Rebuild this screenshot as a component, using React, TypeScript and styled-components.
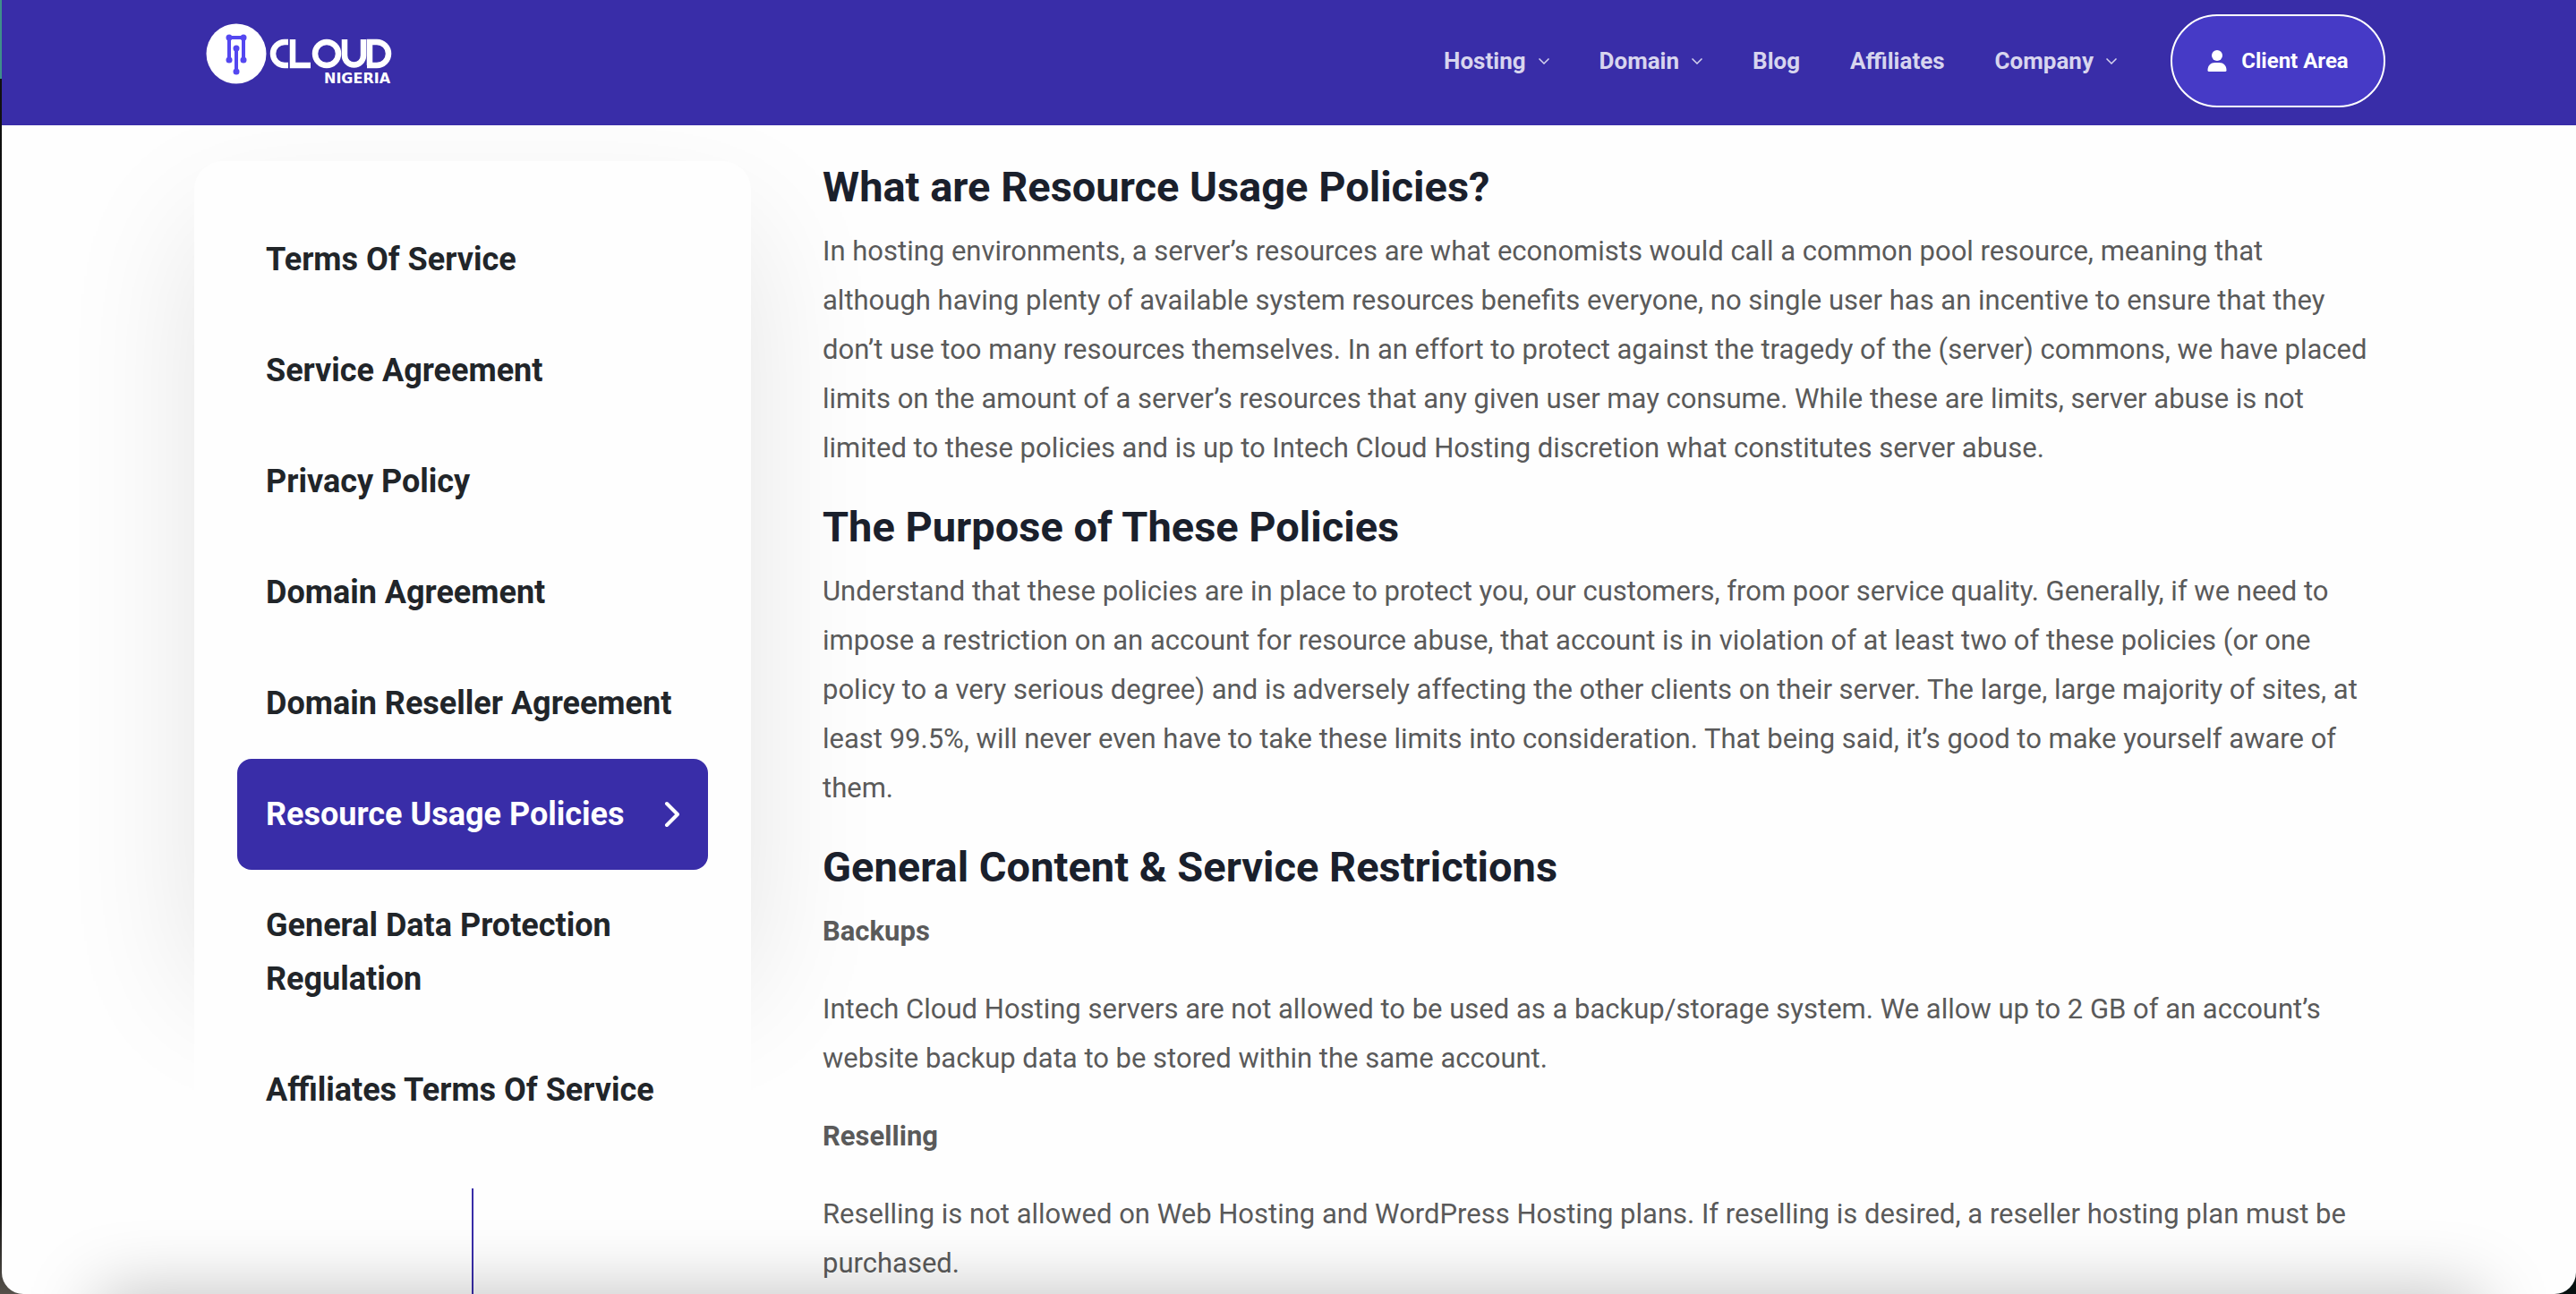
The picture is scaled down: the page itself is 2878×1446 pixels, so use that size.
import React from 'react';
import styled, { createGlobalStyle, css } from 'styled-components';

const brand = '#392da8';

const GlobalStyle = createGlobalStyle`
  * { box-sizing: border-box; }
  html {
    background:
      linear-gradient(90deg, transparent 50%, #06100f 50%),
      linear-gradient(#3f8f8b 88px, #111111 88px, #050505 92%, #55514b 100%);
  }
  body {
    margin: 0;
    font-family: Roboto, "Liberation Sans", sans-serif;
    color: #5a5a5a;
  }
  a { color: inherit; text-decoration: none; }
`;

const Shell = styled.div`
  position: relative;
  height: 100vh;
  margin-left: 2px;
  overflow: hidden;
  background: #fefefe;
  border-radius: 0 0 24px 24px;
`;

const Header = styled.header`
  position: relative;
  z-index: 2;
  padding: 16px 213px 20px 228px;
  background: ${brand};
`;

const HeaderRow = styled.div`
  display: flex;
  align-items: flex-start;
  justify-content: space-between;
`;

const LogoLink = styled.a`
  display: block;
  svg { display: block; }
`;

const Nav = styled.nav`
  display: flex;
  align-items: center;
  gap: 56px;
`;

const NavLink = styled.a`
  display: flex;
  align-items: center;
  gap: 14px;
  font-size: 26px;
  line-height: 40px;
  font-weight: 700;
  color: #d7d5ee;
`;

const ClientButton = styled.button`
  display: flex;
  align-items: center;
  justify-content: center;
  gap: 16px;
  width: 240px;
  height: 104px;
  margin-left: 4px;
  border: 2px solid #ffffff;
  border-radius: 52px;
  background: #463ac6;
  color: #ffffff;
  font: 700 24px/40px Roboto, "Liberation Sans", sans-serif;
  cursor: pointer;
`;

const Main = styled.main`
  display: grid;
  grid-template-columns: 622px minmax(0, 1fr);
  column-gap: 80px;
  align-items: start;
  padding: 40px 228px 0 215px;
`;

const Sidebar = styled.aside`
  position: relative;
  &::before {
    content: '';
    position: absolute;
    inset: 72px 4px 460px;
    box-shadow: 0 0 144px rgba(0, 0, 0, 0.11);
  }
`;

const Card = styled.div`
  position: relative;
  padding: 48px;
  border-radius: 32px;
  background: #fefefe;
`;

const Menu = styled.ul`
  margin: 0;
  padding: 0;
  list-style: none;
`;

const MenuLink = styled.a<{ $active?: boolean }>`
  display: flex;
  align-items: center;
  justify-content: space-between;
  padding: 32px;
  border-radius: 16px;
  font-size: 36px;
  line-height: 60px;
  font-weight: 700;
  color: #212529;
  ${(p) => p.$active && css`
    background: ${brand};
    color: #ffffff;
  `}
`;

const Rail = styled.div`
  width: 2px;
  height: 240px;
  margin: 0 auto;
  background: ${brand};
`;

const Article = styled.article`
  position: relative;
`;

const Section = styled.section`
  margin-bottom: 32px;
`;

const Heading = styled.h2`
  margin: 0 0 16px;
  font-size: 47px;
  line-height: 57px;
  font-weight: 700;
  color: #1a202c;
`;

const Text = styled.p`
  margin: 0 0 32px;
  font-size: 31px;
  line-height: 55px;
`;

const DockShade = styled.div`
  position: absolute;
  z-index: 3;
  top: 100%;
  left: 108px;
  right: 108px;
  height: 200px;
  box-shadow: 0 0 80px rgba(0, 0, 0, 0.25);
  pointer-events: none;
`;

const Logo = () => (
  <svg width="212" height="82" viewBox="0 0 212 82" role="img" aria-label="Cloud Nigeria">
    <circle cx="34" cy="44" r="33.5" fill="#fff" />
    <g stroke="#5447f0" strokeWidth="4" fill="none">
      <path d="M26 51V26H42V51M34 38V64" />
    </g>
    <g fill="#5447f0">
      <circle cx="26" cy="26" r="3.5" />
      <circle cx="42" cy="26" r="3.5" />
      <circle cx="26" cy="51" r="3.5" />
      <circle cx="42" cy="51" r="3.5" />
      <circle cx="34" cy="38" r="3.5" />
      <circle cx="34" cy="64" r="3.5" />
    </g>
    <g stroke="#fff" strokeWidth="6.5" fill="none">
      <path d="M92 31H88a13 13 0 0 0 0 26H92" />
      <path d="M97 28V57H117" />
      <circle cx="135" cy="44" r="13" />
      <path d="M155 28V46a10.500 10.500 0 0 0 21 0V28" />
      <path d="M183 57V31H191a13 13 0 0 1 0 26H180" />
    </g>
    <text x="132" y="77" fill="#fff" fontSize="16" fontWeight="700" fontFamily="DejaVu Sans, sans-serif">NIGERIA</text>
  </svg>
);

const ChevronDown = () => (
  <svg width="12" height="10" viewBox="0 0 12 10" fill="none" stroke="currentColor" strokeWidth="1.5" aria-hidden="true">
    <path d="M0.5 2.500l5.500 5.500 5.500-5.500" />
  </svg>
);

const ChevronRight = () => (
  <svg width="18" height="30" viewBox="0 0 18 30" fill="none" stroke="currentColor" strokeWidth="4" strokeLinecap="round" strokeLinejoin="round" aria-hidden="true">
    <path d="M4 3l12 12L4 27" />
  </svg>
);

const UserIcon = () => (
  <svg width="22" height="24" viewBox="0 0 22 24" fill="currentColor" aria-hidden="true">
    <circle cx="11" cy="6" r="6" />
    <path d="M0.500 22.500C0.500 17 4 14 8.500 14h5c4.500 0 8 3 8 8.500a1.500 1.500 0 0 1-1.500 1.500H2a1.500 1.500 0 0 1-1.500-1.500z" />
  </svg>
);

const navItems = [
  { label: 'Hosting', menu: true },
  { label: 'Domain', menu: true },
  { label: 'Blog' },
  { label: 'Affiliates' },
  { label: 'Company', menu: true },
];

const policies = [
  'Terms Of Service',
  'Service Agreement',
  'Privacy Policy',
  'Domain Agreement',
  'Domain Reseller Agreement',
  'Resource Usage Policies',
  'General Data Protection Regulation',
  'Affiliates Terms Of Service',
];

export default function App() {
  return (
    <>
      <GlobalStyle />
      <Shell>
        <Header>
          <HeaderRow>
            <LogoLink href="#home"><Logo /></LogoLink>
            <Nav>
              {navItems.map((item) => (
                <NavLink key={item.label} href="#nav">
                  {item.label}
                  {item.menu && <ChevronDown />}
                </NavLink>
              ))}
              <ClientButton type="button"><UserIcon />Client Area</ClientButton>
            </Nav>
          </HeaderRow>
        </Header>
        <Main>
          <Sidebar>
            <Card>
              <Menu>
                {policies.map((name) => {
                  const active = name === 'Resource Usage Policies';
                  return (
                    <li key={name}>
                      <MenuLink href="#policy" $active={active} aria-current={active ? 'page' : undefined}>
                        {name}
                        {active && <ChevronRight />}
                      </MenuLink>
                    </li>
                  );
                })}
              </Menu>
            </Card>
            <Rail />
          </Sidebar>
          <Article>
            <Section>
              <Heading>What are Resource Usage Policies?</Heading>
              <Text>
                In hosting environments, a server’s resources are what economists would call a common pool resource,
                meaning that although having plenty of available system resources benefits everyone, no single user has
                an incentive to ensure that they don’t use too many resources themselves. In an effort to protect
                against the tragedy of the (server) commons, we have placed limits on the amount of a server’s resources
                that any given user may consume. While these are limits, server abuse is not limited to these policies
                and is up to Intech Cloud Hosting discretion what constitutes server abuse.
              </Text>
            </Section>
            <Section>
              <Heading>The Purpose of These Policies</Heading>
              <Text>
                Understand that these policies are in place to protect you, our customers, from poor service quality.
                Generally, if we need to impose a restriction on an account for resource abuse, that account is in
                violation of at least two of these policies (or one policy to a very serious degree) and is adversely
                affecting the other clients on their server. The large, large majority of sites, at least 99.5%, will
                never even have to take these limits into consideration. That being said, it’s good to make yourself
                aware of them.
              </Text>
            </Section>
            <Section>
              <Heading>General Content &amp; Service Restrictions</Heading>
              <Text><strong>Backups</strong></Text>
              <Text>
                Intech Cloud Hosting servers are not allowed to be used as a backup/storage system. We allow up to 2 GB
                of an account’s website backup data to be stored within the same account.
              </Text>
              <Text><strong>Reselling</strong></Text>
              <Text>
                Reselling is not allowed on Web Hosting and WordPress Hosting plans. If reselling is desired, a reseller
                hosting plan must be purchased.
              </Text>
            </Section>
          </Article>
        </Main>
        <DockShade />
      </Shell>
    </>
  );
}
